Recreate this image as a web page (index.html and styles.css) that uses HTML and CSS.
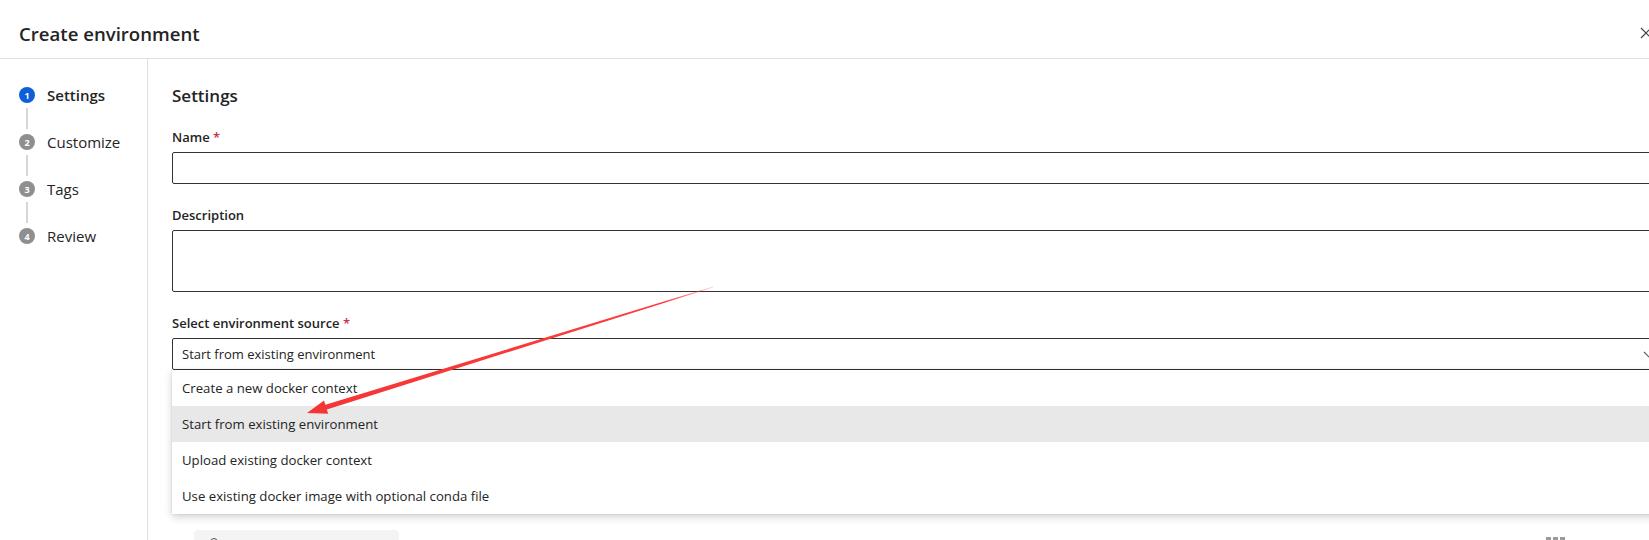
FILE: index.html
```html
<!DOCTYPE html>
<html lang="en">
<head>
    <meta charset="UTF-8">
    <meta name="viewport" content="width=device-width, initial-scale=1.0">
    <title>Create environment</title>
    <link rel="stylesheet" href="styles.css">
</head>
<body>
    <div class="panel">
        <div class="panel-header">
            <h1 class="panel-title">Create environment</h1>
            <button class="close-btn" aria-label="Close">
                <svg width="12" height="12" viewBox="0 0 12 12"><path d="M1 1L11 11M11 1L1 11" stroke="#424242" stroke-width="1.2" fill="none"/></svg>
            </button>
        </div>

        <div class="panel-body">
            <nav class="steps">
                <div class="step active">
                    <span class="step-dot">1</span>
                    <span class="step-label">Settings</span>
                </div>
                <div class="step-line"></div>
                <div class="step">
                    <span class="step-dot">2</span>
                    <span class="step-label">Customize</span>
                </div>
                <div class="step-line"></div>
                <div class="step">
                    <span class="step-dot">3</span>
                    <span class="step-label">Tags</span>
                </div>
                <div class="step-line"></div>
                <div class="step">
                    <span class="step-dot">4</span>
                    <span class="step-label">Review</span>
                </div>
            </nav>

            <main class="content">
                <h2 class="section-title">Settings</h2>

                <div class="field">
                    <label class="field-label">Name <span class="required">*</span></label>
                    <div class="input"></div>
                </div>

                <div class="field">
                    <label class="field-label">Description</label>
                    <div class="input textarea"></div>
                </div>

                <div class="field select-field">
                    <label class="field-label">Select environment source <span class="required">*</span></label>
                    <div class="input select">
                        <span>Start from existing environment</span>
                        <svg class="chevron" width="12" height="12" viewBox="0 0 12 12"><path d="M1 4L6 9L11 4" stroke="#616161" stroke-width="1.2" fill="none"/></svg>
                    </div>

                    <ul class="dropdown">
                        <li class="option">Create a new docker context</li>
                        <li class="option hovered">Start from existing environment</li>
                        <li class="option">Upload existing docker context</li>
                        <li class="option">Use existing docker image with optional conda file</li>
                    </ul>
                </div>

                <div class="toolbar">
                    <div class="pill"><span class="pill-icon"></span></div>
                    <div class="more-dots"><i></i><i></i><i></i></div>
                </div>
            </main>
        </div>
    </div>

    <!-- annotation arrow drawn over the screenshot -->
    <svg class="annotation" width="1649" height="540" viewBox="0 0 1649 540">
        <defs>
            <linearGradient id="fade" x1="713" y1="287" x2="307" y2="413" gradientUnits="userSpaceOnUse">
                <stop offset="0" stop-color="#ff3b3b" stop-opacity="0.2"/>
                <stop offset="0.12" stop-color="#ff3b3b" stop-opacity="1"/>
                <stop offset="1" stop-color="#f53535"/>
            </linearGradient>
        </defs>
        <polygon fill="url(#fade)" points="713,286.6 325.4,404.7 324,400.4 307,413 328.2,413.8 326.8,409.5 713,287.4"/>
    </svg>
</body>
</html>
```

FILE: styles.css
```css
* {
    box-sizing: border-box;
}

body {
    margin: 0;
    font-family: 'Segoe UI', 'Open Sans', sans-serif;
    color: #242424;
    background: #fff;
    overflow: hidden;
    position: relative;
}

.panel {
    width: 1680px;
    height: 540px;
    display: flex;
    flex-direction: column;
}

.panel-header {
    height: 59px;
    padding: 8px 28px 0 19px;
    display: flex;
    align-items: center;
    border-bottom: 1px solid #e0e0e0;
}

.panel-title {
    margin: 0;
    font-size: 18.6px;
    font-weight: 600;
}

.close-btn {
    margin-left: auto;
    width: 12px;
    height: 12px;
    padding: 0;
    border: none;
    background: none;
    display: flex;
}

.panel-body {
    flex: 1;
    display: flex;
    min-height: 0;
}

.steps {
    width: 148px;
    flex-shrink: 0;
    border-right: 1px solid #e0e0e0;
    padding: 28px 0 0 19px;
}

.step {
    display: flex;
    align-items: center;
    height: 16px;
}

.step-dot {
    width: 16px;
    height: 16px;
    border-radius: 50%;
    background: #8f8f8f;
    color: #fff;
    font-size: 9px;
    font-weight: 700;
    display: flex;
    align-items: center;
    justify-content: center;
    flex-shrink: 0;
}

.step.active .step-dot {
    background: #0f5fd8;
}

.step-label {
    margin-left: 12px;
    font-size: 15px;
    white-space: nowrap;
}

.step.active .step-label {
    font-weight: 600;
}

.step-line {
    width: 2px;
    height: 21px;
    margin: 5px 0 5px 7px;
    background: #d6d6d6;
}

.content {
    flex: 1;
    padding: 25px 0 0 24px;
}

.section-title {
    margin: 0 0 19px;
    font-size: 17px;
    font-weight: 600;
    line-height: 24px;
}

.field {
    margin-bottom: 21px;
}

.field-label {
    display: block;
    font-size: 13px;
    font-weight: 600;
    line-height: 20px;
    margin-bottom: 5px;
}

.required {
    color: #c4314b;
}

.input {
    width: 1496px;
    height: 32px;
    border: 1px solid #333;
    border-radius: 2px;
}

.textarea {
    height: 62px;
}

.select-field {
    position: relative;
    margin-bottom: 0;
}

.select {
    display: flex;
    align-items: center;
    padding: 0 12px 0 9px;
    font-size: 13px;
}

.chevron {
    margin-left: auto;
}

.dropdown {
    position: absolute;
    top: 57px;
    left: 0;
    width: 1496px;
    margin: 0;
    padding: 0;
    list-style: none;
    background: #fff;
    box-shadow: 0 3px 8px rgba(0, 0, 0, 0.18), 0 0 2px rgba(0, 0, 0, 0.12);
    z-index: 2;
}

.option {
    height: 36px;
    padding: 0 10px;
    display: flex;
    align-items: center;
    font-size: 13.2px;
}

.option.hovered {
    background: #e8e8e8;
}

.toolbar {
    margin-top: 160px;
    width: 1393px;
    padding-left: 22px;
    display: flex;
}

.pill {
    width: 205px;
    height: 30px;
    border-radius: 4px;
    background: #f4f4f4;
    padding: 8px 0 0 16px;
}

.pill-icon {
    display: block;
    width: 8px;
    height: 8px;
    border: 1.5px solid #555;
    border-radius: 50%;
}

.more-dots {
    margin-left: auto;
    padding-top: 7px;
    display: flex;
    gap: 2px;
}

.more-dots i {
    width: 5px;
    height: 4px;
    background: #9a9a9a;
}

.annotation {
    position: absolute;
    top: 0;
    left: 0;
    pointer-events: none;
    z-index: 5;
}
```
